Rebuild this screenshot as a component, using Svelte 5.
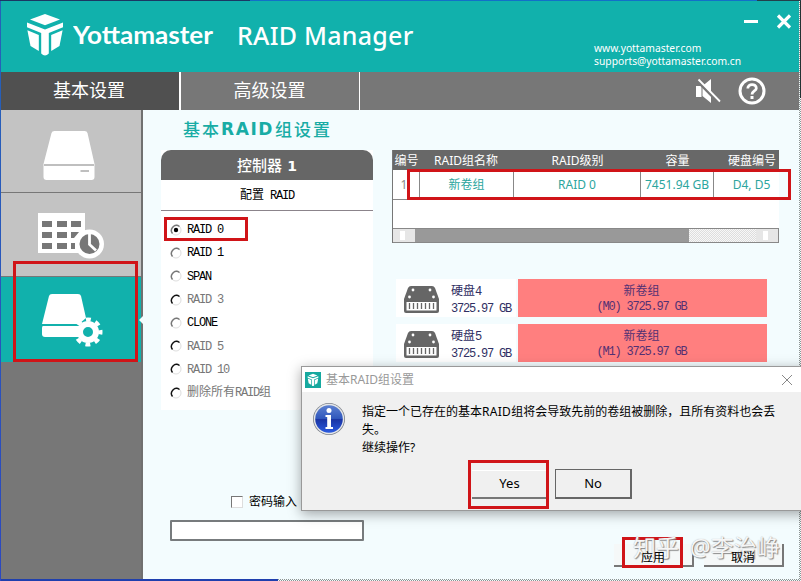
<script>
  const levels = [
    { label: 'RAID 0', enabled: true, checked: true },
    { label: 'RAID 1', enabled: true },
    { label: 'SPAN', enabled: true },
    { label: 'RAID 3' },
    { label: 'CLONE', enabled: true },
    { label: 'RAID 5' },
    { label: 'RAID 10' },
    { label: '删除所有RAID组' }
  ];
  const disks = [
    { name: '硬盘4', tag: '(M0)' },
    { name: '硬盘5', tag: '(M1)' }
  ];
  const size = '3725.97 GB';
  const parts = (text) => text.split(/([\x20-\x7e]+)/).filter(Boolean);
</script>

{#snippet bitmap(text)}{#each parts(text) as part}{#if /^[\x20-\x7e]/.test(part)}<span class="mono">{part}</span>{:else}{part}{/if}{/each}{/snippet}

{#snippet cube()}
  <path d="M3 5.500 18 0 33 5.500 18 11.300Z" />
  <path d="M0 8.500 18 15.500 36 8.500V13.300L21.800 19V39.500Q18 43.500 14.200 39.500V19L0 13.300Z" />
  <path d="M.4 16.300 11.800 21V37L3.500 32Z" />
  <path d="M35.600 16.300 24.200 21V37L32.500 32Z" />
{/snippet}

<div class="desktop">
  <div class="window">
    <header>
      <svg class="cube" width="36" height="42" viewBox="0 0 36 42" fill="#fff">{@render cube()}</svg>
      <svg class="word" width="142" height="36" viewBox="0 0 142 36">
        <text x="0" y="26" textLength="140" lengthAdjust="spacingAndGlyphs">Yottamaster</text>
      </svg>
      <h1>RAID Manager</h1>
      <div class="contact">www.yottamaster.com<br />supports@yottamaster.com.cn</div>
      <svg class="winbtns" width="48" height="18" viewBox="0 0 48 18" stroke="#fff" fill="none">
        <path d="M1 10.500H15" stroke-width="3" />
        <path d="M35 4.500 47 16.500M47 4.500 35 16.500" stroke-width="3.200" />
      </svg>
    </header>

    <nav>
      <div class="tab on">基本设置</div>
      <div class="tab">高级设置</div>
      <div class="tools">
        <svg width="26" height="26" viewBox="0 0 26 26">
          <path d="M1 8H6.500V19H1ZM7.500 8 16 1V25L7.500 18Z" fill="#fff" />
          <path d="M2 2.500 23.500 24.500" stroke="#777" stroke-width="3" />
          <path d="M3.500 1.500 25 23.500" stroke="#fff" stroke-width="1.800" />
        </svg>
        <svg width="28" height="28" viewBox="0 0 28 28" fill="none" stroke="#fff">
          <circle cx="14" cy="14" r="12" stroke-width="3" />
          <path d="M9.800 11.500C9.800 6.300 18.300 6.300 18.300 11.200 18.300 14 14 14 14 17.500" stroke-width="2.800" />
          <path d="M12.500 19H15.500V22H12.500Z" fill="#fff" stroke="none" />
        </svg>
      </div>
    </nav>

    <div class="body">
      <aside>
        <div class="side">
          <svg width="60" height="56" viewBox="0 0 60 56">
            <path d="M11 3Q11.500 1 14 1H44Q46.500 1 47 3L54 34V47Q54 50 51 50H6Q3 50 3 47V34Z" fill="#fff" transform="translate(-.5 0)" />
            <path d="M3 35H53" stroke="#aaa" stroke-width="1.400" />
            <path d="M39.500 41H48" stroke="#aaa" stroke-width="1.500" />
          </svg>
        </div>
        <div class="side">
          <svg width="68" height="48" viewBox="0 0 68 48">
            <path d="M1 1H48V41H1Z" fill="#fff" />
            <path d="M5 9H15V15H5ZM20 9H30V15H20ZM34 9H44V15H34ZM5 20H15V26H5ZM20 20H30V26H20ZM34 20H42L37 26H34ZM5 31H15V37H5ZM20 31H30V37H20ZM34 31H38V37H34Z" fill="#777" />
            <circle cx="52.500" cy="32" r="14.500" fill="#fff" />
            <circle cx="52.500" cy="32" r="10" fill="#777" />
            <path d="M52.500 22V32.500L59 38.500" fill="none" stroke="#fff" stroke-width="2.800" />
          </svg>
        </div>
        <div class="side current">
          <svg width="64" height="56" viewBox="0 0 64 56">
            <path d="M9 3Q9.500 1 12 1H38Q40.500 1 41 3L46 25 39 31H2Z" fill="#fff" />
            <path d="M3 33H39L43 44H5Q2 44 2 41V35Q2 33 3 33Z" fill="#fff" />
            <circle cx="48" cy="39" r="8" fill="#11b1ac" stroke="#fff" stroke-width="6" />
            <circle cx="48" cy="39" r="12.500" fill="none" stroke="#fff" stroke-width="4" stroke-dasharray="4.900 4.917" stroke-dashoffset="2.450" />
          </svg>
          <span class="notch"></span>
        </div>
      </aside>

      <main>
        <section class="left">
          <h2><span>基本</span><b>RAID</b><span>组设置</span></h2>
          <div class="panel">
            <div class="phead">控制器 <b>1</b></div>
            <div class="pconf">{@render bitmap('配置 RAID')}</div>
            <div class="levels">
              {#each levels as level}
                <div class="level" class:off={!level.enabled}>
                  <svg width="12" height="12" viewBox="0 0 12 12" fill="none">
                    <circle cx="6" cy="6" r="5" stroke="#dedede" />
                    <path d="M2.500 9.500A5 5 0 0 1 9.500 2.500" stroke={level.enabled ? '#777' : '#111'} stroke-width="1.400" />
                    {#if level.checked}<circle cx="6" cy="6" r="2.200" fill="#000" />{/if}
                  </svg>
                  <span>{@render bitmap(level.label)}</span>
                </div>
              {/each}
            </div>
          </div>
          <div class="pwd"><span class="check"></span>密码输入</div>
          <div class="field"></div>
        </section>

        <section class="right">
          <div class="table">
            <div class="row th"><span>编号</span><span>RAID组名称</span><span>RAID级别</span><span>容量</span><span>硬盘编号</span></div>
            <div class="row td"><span>1</span><span>新卷组</span><span>RAID 0</span><span>7451.94 GB</span><span>D4, D5</span></div>
            <div class="blank"></div>
            <div class="scroll"><i></i><b></b><em></em><i></i></div>
          </div>
          <div class="disks">
            {#each disks as disk}
              <div class="disk">
                <div class="info">
                  <svg width="37" height="29" viewBox="0 0 37 29">
                    <path d="M8 1H29Q31 1 32 3L36 14V26Q36 28 34 28H3Q1 28 1 26V14L5 3Q6 1 8 1Z" fill="#666" />
                    <path d="M3.500 17H33.500V25.500H3.500Z" fill="#fff" />
                    <path d="M6.500 18V24M10.500 18V24M14.500 18V24M18.500 18V24M22.500 18V24M26.500 18V24M30.500 18V24" stroke="#666" stroke-width="1.300" />
                    <g fill="#fff"><circle cx="10" cy="5" r="1.400" /><circle cx="27" cy="5" r="1.400" /><circle cx="6.500" cy="12" r="1.400" /><circle cx="30.500" cy="12" r="1.400" /></g>
                  </svg>
                  <div class="cap">{@render bitmap(disk.name)}<br />{@render bitmap(size)}</div>
                </div>
                <div class="bar">新卷组<br />{@render bitmap(`${disk.tag} ${size}`)}</div>
              </div>
            {/each}
          </div>
          <div class="actions"><div class="btn"><span>应用</span></div><div class="btn"><span>取消</span></div></div>
        </section>
      </main>
    </div>
  </div>

  <div class="dialog">
    <div class="dtitle">
      <svg width="16" height="16" viewBox="-9 -6 54 54"><path d="M-9-6H45V48H-9Z" fill="#16a99f" /><g fill="#fff">{@render cube()}</g></svg>
      <span>基本RAID组设置</span>
      <svg class="x" width="12" height="12" viewBox="0 0 12 12" stroke="#888"><path d="M1 1 11 11M11 1 1 11" /></svg>
    </div>
    <div class="dbody">
      <svg width="34" height="34" viewBox="0 0 34 34">
        <defs>
          <linearGradient id="ball" x1="0" y1="0" x2="0" y2="1"><stop offset="0" stop-color="#5b7fd0" /><stop offset=".48" stop-color="#3158bd" /><stop offset=".52" stop-color="#1a34a4" /><stop offset="1" stop-color="#2b5be0" /></linearGradient>
        </defs>
        <circle cx="17" cy="17" r="16" fill="#7d828c" />
        <circle cx="17" cy="17" r="15.200" fill="#e4e6e8" />
        <circle cx="17" cy="17" r="13.800" fill="url(#ball)" />
        <circle cx="17" cy="8.500" r="2.500" fill="#fff" />
        <path d="M13.500 13H19V25H21V27H13.500V25H15.200V15H13.500Z" fill="#fff" />
      </svg>
      <p>指定一个已存在的基本<span>RAID</span>组将会导致先前的卷组被删除，且所有资料也会丢失。<br />继续操作?</p>
    </div>
    <div class="dbtns"><div class="yes">Yes</div><div class="no">No</div></div>
  </div>

  <div class="mark raid"></div>
  <div class="mark tile"></div>
  <div class="mark volume"></div>
  <div class="mark accept"></div>
  <div class="mark apply"></div>
  <div class="water">知乎 <span>@李治峥</span></div>
</div>

<style>
  .desktop {
    position: relative; box-sizing: border-box; width: 801px; height: 581px; overflow: hidden;
    padding: 1px 2px 2px 1px;
    background:
      linear-gradient(90deg, #1b3764 0 250px, #1270c8 250px 757px, #23404a 757px) 0 0 / 801px 1px no-repeat,
      linear-gradient(#2563b8, #2c48c0) 0 0 / 1px 581px no-repeat,
      linear-gradient(#1f3fae, #1f3fae) 0 100% / 278px 2px no-repeat,
      linear-gradient(#233 0, #233 100%) 100% 0 / 1px 98px no-repeat,
      repeating-conic-gradient(#8a9494 0 25%, #f4fafa 0 50%) 0 0 / 2px 2px;
    font: 12px/18px "Noto Sans", "Noto Sans CJK SC", sans-serif; color: #000;
  }
  .window { display: flex; flex-direction: column; height: 578px; width: 798px; background: #f3fcfe; }
  header { display: flex; flex: none; height: 71px; background: #11b1ac; color: #fff; align-items: flex-start; }
  .cube { margin: 13px 0 0 26px; flex: none; }
  .word { margin: 17px 0 0 10px; flex: none; }
  .word text { font: 700 25px "Lato", sans-serif; fill: #fff; }
  h1 { margin: 16px 0 0 22px; width: 182px; flex: none; font-size: 25px; line-height: 36px; font-weight: 500; letter-spacing: .25px; white-space: nowrap; }
  .contact { margin: 41px 0 0 175px; width: 148px; flex: none; font-size: 10.300px; line-height: 13px; white-space: nowrap; }
  .winbtns { margin: 10px 0 0 1px; flex: none; }
  nav { display: flex; flex: none; height: 38px; background: #777; color: #fff; }
  .tab { box-sizing: border-box; width: 179px; padding-right: 1px; border-right: 1px solid #fff; text-align: center; font-size: 18px; line-height: 36px; }
  .tab.on { width: 180px; padding-right: 2px; border-right-width: 2px; background: #505050; }
  .tools { display: flex; align-items: center; gap: 17px; margin-left: auto; margin-right: 33px; }
  .body { display: flex; flex: 1; min-height: 0; }
  aside { box-sizing: border-box; width: 142px; background: #777; border-right: 2px solid #707070; }
  .side { box-sizing: border-box; position: relative; height: 83px; padding: 20px 0 0 40px; background: #c3c3c3; border-bottom: 1px solid #777; }
  .side + .side { height: 84px; padding: 19px 0 0 36px; }
  .side.side.current { height: 85px; padding: 16px 0 0 39px; background: #11b1ac; border: 0; }
  .side svg { display: block; }
  .notch { position: absolute; right: -2px; top: 39px; border: 4px solid transparent; border-right-color: #f3fcfe; border-left: 0; }
  main { display: flex; flex: 1; }
  .left { width: 212px; margin-left: 18px; }
  h2 { display: flex; margin: 7px 0 0 22px; height: 33px; line-height: 23px; color: #18aca5; font-size: 17px; font-weight: 500; }
  h2 b { font: 700 17px/24px "DejaVu Sans", sans-serif; letter-spacing: 1.600px; margin-right: 1px; }
  h2 span { font-family: "Noto Sans CJK SC", sans-serif; letter-spacing: 2px; }
  .panel { height: 260px; background: #fff; }
  .phead { height: 30px; border-radius: 10px 10px 0 0; background: #666; color: #fff; text-align: center; font: 500 15px/30px "Noto Sans CJK SC", sans-serif; word-spacing: 2px; }
  .phead b { font-family: "DejaVu Sans", sans-serif; font-size: 14px; }
  .pconf { height: 30px; border-bottom: 1px solid #8b848b; text-align: center; line-height: 30px; }
  .mono { font-family: "Liberation Mono", monospace; letter-spacing: -1.200px; }
  .levels { padding: 7px 0 0 9px; }
  .level { display: flex; align-items: center; gap: 5px; height: 23.300px; }
  .off { color: #777; }
  .pwd { display: flex; align-items: center; gap: 6px; margin: 83px 0 0 70px; }
  .check { box-sizing: border-box; width: 12px; height: 12px; border: 1px solid #ddd; border-top-color: #777; border-left-color: #777; background: #fff; }
  .field { box-sizing: border-box; width: 194px; height: 21px; margin: 9px 0 0 9px; border: 2px solid #777b7d; border-radius: 1px; background: #fff; }
  .right { display: flex; flex-direction: column; width: 407px; margin-left: 19px; padding-top: 40px; }
  .table { box-sizing: border-box; width: 387px; height: 93px; border-left: 1px solid #777; background: #fff; }
  .row { display: grid; grid-template-columns: 27px 94px 127px 73px 65px; text-align: center; white-space: nowrap; }
  .th { height: 20px; background: #686868; color: #fff; line-height: 21px; }
  .th span:nth-child(2) { margin-left: -2px; }
  .th span:first-child { margin-left: 0; }
  .th span:last-child { padding-left: 11px; }
  .td { height: 29px; border-bottom: 1px solid #888; color: #2ba59e; line-height: 29px; }
  .td span:not(:last-child) { border-right: 1px solid #888; }
  .td span:first-child { color: #888; text-indent: -4px; }
  .td span:last-child { padding-left: 10px; }
  .blank { height: 28px; }
  .scroll { display: flex; box-sizing: border-box; height: 15px; border: 1px solid #888; border-left: 0; }
  .scroll i { box-sizing: border-box; width: 22px; background: #fff; border: solid #e6e6e6; border-width: 2px 10px 2px 7px; }
  .scroll b { width: 274px; background: #999; }
  .scroll em { flex: 1; background: repeating-conic-gradient(#ddd 0 25%, #f7f7f7 0 50%) 0 0 / 2px 2px; }
  .disks { display: flex; flex-direction: column; gap: 7px; margin: 36px 0 0 4px; }
  .disk { display: flex; gap: 2px; height: 38px; color: #302f63; line-height: 15px; }
  .info { display: flex; width: 120px; background: #fff; white-space: nowrap; }
  .info svg { margin: 6px 0 0 7px; flex: none; }
  .cap { margin: 4px 0 0 11px; }
  .bar { box-sizing: border-box; width: 249px; height: 38px; padding: 4px 2px 0 0; background: #ff7f7f; text-align: center; color: #543173; }
  .actions { display: flex; gap: 10px; margin: 182px 0 0 222px; }
  .btn { box-sizing: border-box; width: 80px; height: 23px; padding-top: 2px; border: solid #777; border-width: 0 2px 2px 0; text-align: center; line-height: 24px; background: #f5f8f8; }
  .btn span { position: relative; z-index: 2; }
  .dialog { position: absolute; box-sizing: border-box; left: 301px; top: 366px; width: 510px; height: 145px; border: 1px solid #999; background: #f0f0f0; box-shadow: 0 3px 12px rgba(0,0,0,.35); }
  .dtitle { display: flex; align-items: center; gap: 5px; height: 25px; padding-left: 3px; background: #fff; color: #999; }
  .x { margin-left: auto; margin-right: 17px; }
  .dbody { display: flex; height: 77px; padding-left: 10px; }
  .dbody svg { flex: none; margin-top: 10px; }
  p { margin: 11px 0 0 16px; width: 416px; color: #000; line-height: 18px; }
  p span { letter-spacing: .3px; }
  .dbtns { display: flex; gap: 8px; padding-left: 170px; font-size: 13px; text-align: center; }
  .yes { width: 75px; height: 26px; margin-top: 1px; border-bottom: 2px solid #777; border-top: 1px solid #fff; line-height: 25px; }
  .no { box-sizing: border-box; width: 77px; height: 30px; border: solid #666; border-width: 1px 2px 2px 1px; line-height: 27px; }
  .mark { position: absolute; box-sizing: border-box; border: 3px solid #d01418; }
  .raid { left: 164px; top: 217px; width: 84px; height: 24px; }
  .tile { left: 13px; top: 261px; width: 125px; height: 101px; }
  .volume { left: 407px; top: 169px; width: 384px; height: 31px; }
  .accept { left: 468px; top: 460px; width: 81px; height: 49px; }
  .apply { left: 622px; top: 537px; width: 61px; height: 31px; }
  .water { position: absolute; left: 633px; top: 531px; z-index: 1; display: flex; gap: 11px; font-size: 23px; line-height: 32px; color: rgba(255,255,255,.92); text-shadow: 1px 1px 1px #888, 0 0 1px #aaa; white-space: nowrap; }
</style>
